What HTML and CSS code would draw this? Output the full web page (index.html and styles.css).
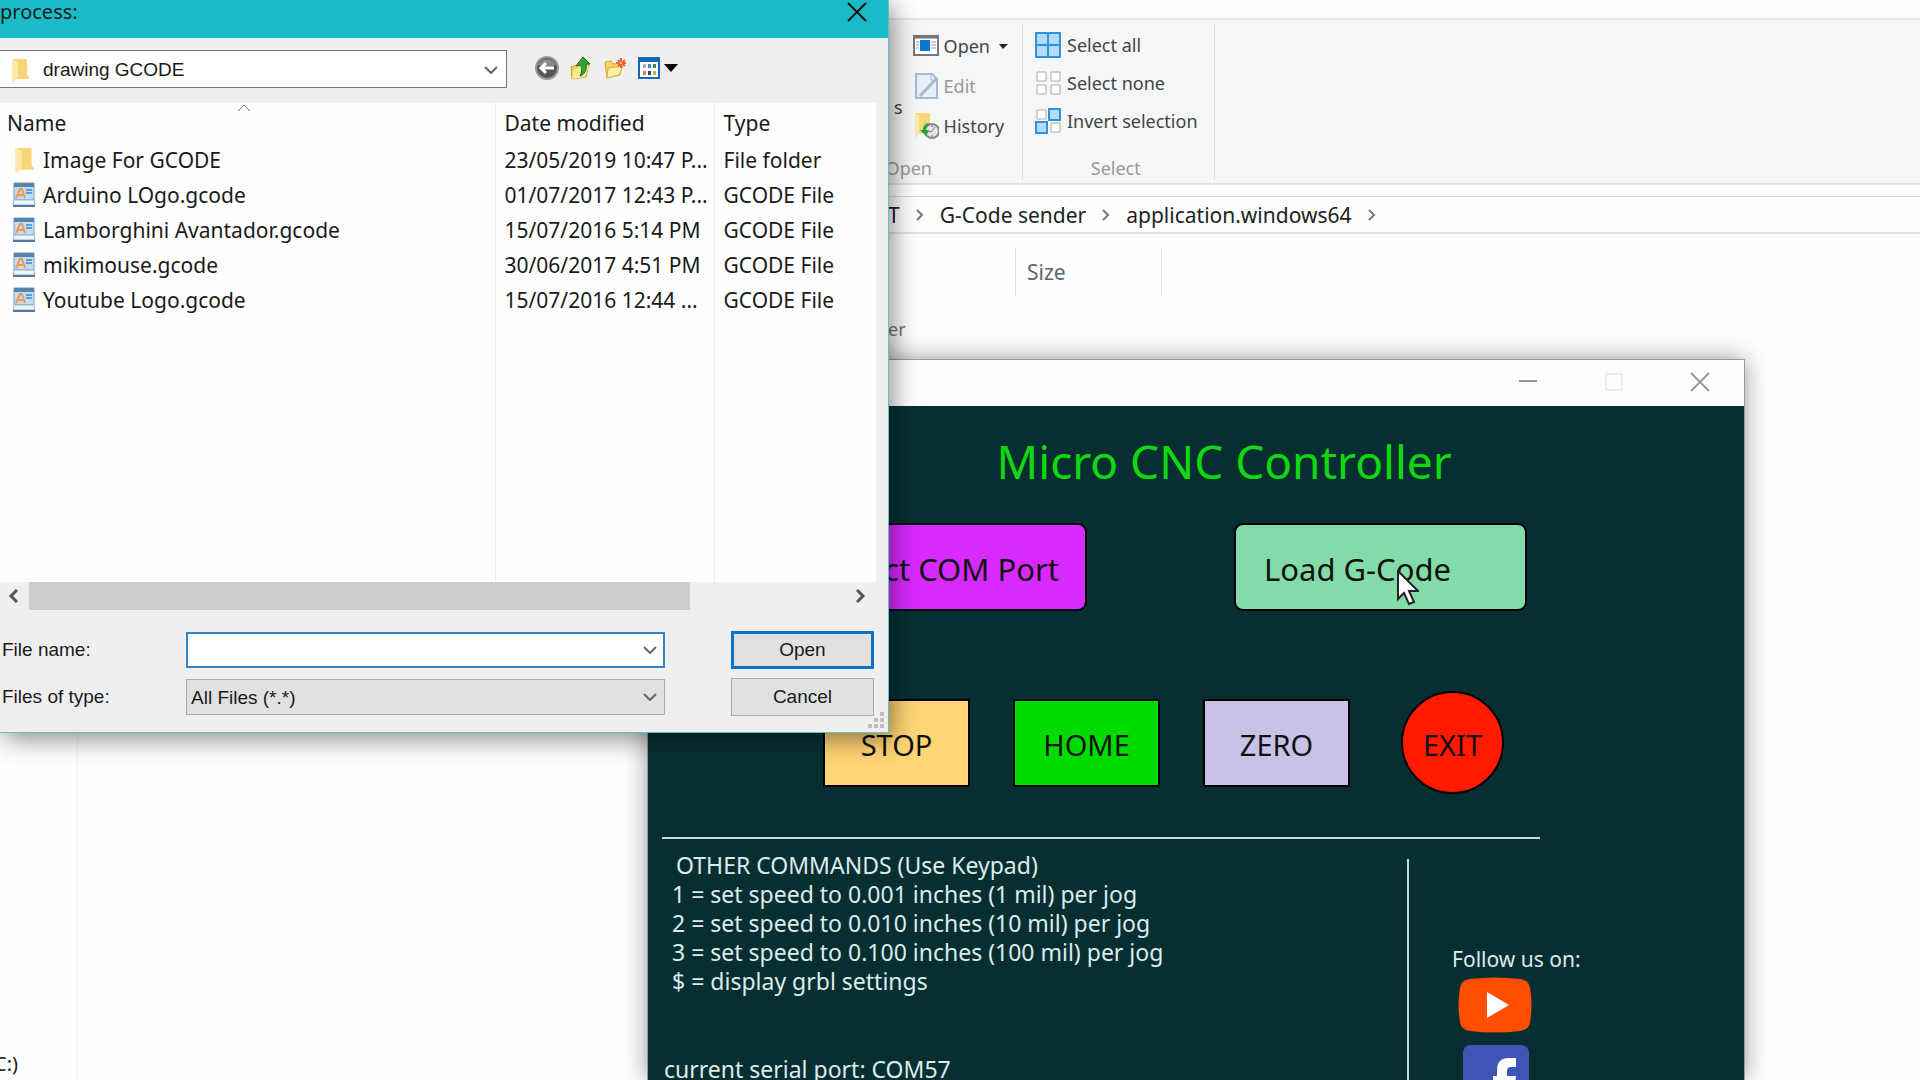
FILE: index.html
```html
<!DOCTYPE html>
<html lang="en">
<head>
    <meta charset="UTF-8">
    <meta name="viewport" content="width=device-width, initial-scale=1.0">
    <title>Micro CNC Controller</title>
    <link rel="stylesheet" href="styles.css">
</head>
<body>
    <svg class="defs" width="0" height="0" aria-hidden="true">
        <symbol id="folder" viewBox="0 0 18 24">
            <path d="M2 1h14v16l2 2v2H5z" fill="#f8d675"/>
            <path d="M1 1l6 3v16l-5 4-1-1z" fill="#fde9a9"/>
        </symbol>
        <symbol id="file" viewBox="0 0 24 26">
            <path d="M2 1h20v17H2z" fill="#c3dcf3" stroke="#7c9dbb"/>
            <path d="M2 1h20v4H2z" fill="#5584ad"/>
            <path d="M4 16l4-9h2l3 9M6 13h5" fill="none" stroke="#f09a4a" stroke-width="2"/>
            <path d="M14 8h6M14 11h6" stroke="#5b9be0" stroke-width="2"/>
            <path d="M2 18h20l1 5H1z" fill="#eef4fa" stroke="#9db4ca"/>
            <path d="M1 24h22" stroke="#56789b" stroke-width="2"/>
        </symbol>
        <symbol id="down" viewBox="0 0 14 8">
            <path d="M1 1l6 6 6-6" fill="none" stroke="#666" stroke-width="2"/>
        </symbol>
        <symbol id="chevron" viewBox="0 0 8 12">
            <path d="M1 1l5 5-5 5" fill="none" stroke="#777" stroke-width="2"/>
        </symbol>
    </svg>

    <!-- File explorer -->
    <main class="explorer">
        <div class="ribbon">
            <section class="group group-open">
                <div class="group-body">
                    <span class="cut">s</span>
                    <div class="commands">
                        <button type="button">
                            <svg width="26" height="22" viewBox="0 0 26 22">
                                <path d="M1 1h24v19H1z" fill="#fff" stroke="#777" stroke-width="2"/>
                                <path d="M1 2h24" stroke="#777" stroke-width="3"/>
                                <path d="M7 5h10v11H7z" fill="#0a74d8"/>
                                <path d="M3 7h3M3 10h3M3 13h3M18 7h5M18 10h5M18 13h5" stroke="#999"/>
                            </svg>
                            Open
                            <svg class="drop" width="9" height="5" viewBox="0 0 9 5"><path d="M0 0h9L4 5z" fill="#222"/></svg>
                        </button>
                        <button type="button" disabled>
                            <svg width="26" height="28" viewBox="0 0 26 28">
                                <path d="M3 2h16l5 5v19H3z" fill="#e6effa" stroke="#a9b8cc" stroke-width="2"/>
                                <path d="M18 2v6h6" fill="none" stroke="#a9b8cc"/>
                                <path d="M7 24L24 6" stroke="#a9b8cc" stroke-width="3"/>
                            </svg>
                            Edit
                        </button>
                        <button type="button">
                            <svg width="26" height="28" viewBox="0 0 26 28">
                                <path d="M2 1h15v18L6 22l-4 4z" fill="#fbd77c"/>
                                <path d="M2 1l4 3v18l-4 4z" fill="#fde9a9"/>
                                <circle cx="19" cy="19" r="7" fill="#e4e6e6" stroke="#888" stroke-width="2"/>
                                <path d="M15 19l3 1 4-5M19 13v2M19 23v2" fill="none" stroke="#777"/>
                                <path d="M17 11c-6 0-7 4-7 7H7l6 6 3-6h-3c0-3 1-5 4-7z" fill="#21a33c"/>
                            </svg>
                            History
                        </button>
                    </div>
                </div>
                <span class="group-name">Open</span>
            </section>
            <section class="group group-select">
                <div class="commands">
                    <button type="button">
                        <svg width="28" height="28" viewBox="0 0 28 28">
                            <path d="M2 2h24v24H2zM14 2v24M2 14h24" fill="#b4dcfa" stroke="#3390dc" stroke-width="2"/>
                        </svg>
                        Select all
                    </button>
                    <button type="button">
                        <svg width="28" height="28" viewBox="0 0 28 28">
                            <path d="M3 3h9v9H3zM17 3h9v9h-9zM3 16h9v9H3zM17 16h9v9h-9z" fill="#fff" stroke="#aaa"/>
                        </svg>
                        Select none
                    </button>
                    <button type="button">
                        <svg width="28" height="28" viewBox="0 0 28 28">
                            <path d="M3 3h9v9H3zM17 16h9v9h-9z" fill="#fff" stroke="#aaa"/>
                            <path d="M15 2h11v11H15zM2 15h11v11H2z" fill="#b4dcfa" stroke="#3390dc" stroke-width="2"/>
                        </svg>
                        Invert selection
                    </button>
                </div>
                <span class="group-name">Select</span>
            </section>
        </div>

        <nav class="address">
            <a href="#">T</a>
            <svg width="8" height="12"><use href="#chevron"/></svg>
            <a href="#">G-Code sender</a>
            <svg width="8" height="12"><use href="#chevron"/></svg>
            <a href="#">application.windows64</a>
            <svg width="8" height="12"><use href="#chevron"/></svg>
        </nav>

        <div class="content">
            <aside class="tree">C:)</aside>
            <div class="files">
                <div class="file-heads"><span class="size-head">Size</span></div>
                <div class="file-type">er</div>
            </div>
        </div>
    </main>

    <!-- CNC controller window -->
    <section class="cnc">
        <header class="cnc-bar">
            <button type="button" aria-label="Minimize"><svg width="20" height="20" viewBox="0 0 20 20"><path d="M1 9h18" stroke="#999" stroke-width="2"/></svg></button>
            <button type="button" aria-label="Maximize" disabled><svg width="20" height="20" viewBox="0 0 20 20"><path d="M2 2h16v16H2z" fill="none" stroke="#ddd"/></svg></button>
            <button type="button" aria-label="Close"><svg width="20" height="20" viewBox="0 0 20 20"><path d="M1 1l18 18M19 1L1 19" stroke="#999" stroke-width="2"/></svg></button>
        </header>
        <div class="cnc-body">
            <h1>Micro CNC Controller</h1>
            <div class="main-buttons">
                <button type="button" class="port">Select COM Port</button>
                <button type="button" class="load">Load G-Code
                    <svg class="cursor" width="22" height="36" viewBox="0 0 22 36"><path d="M1 1v28l6-6 5 11 5-2-5-11h9z" fill="#fff" stroke="#222" stroke-width="2"/></svg>
                </button>
            </div>
            <div class="move-buttons">
                <button type="button" class="stop">STOP</button>
                <button type="button" class="home">HOME</button>
                <button type="button" class="zero">ZERO</button>
                <button type="button" class="exit">EXIT</button>
            </div>
            <hr>
            <div class="lower">
                <div class="help">
                    <h2>OTHER COMMANDS (Use Keypad)</h2>
                    <p>1 = set speed to 0.001 inches (1 mil) per jog</p>
                    <p>2 = set speed to 0.010 inches (10 mil) per jog</p>
                    <p>3 = set speed to 0.100 inches (100 mil) per jog</p>
                    <p>$ = display grbl settings</p>
                    <p class="serial">current serial port: COM57</p>
                </div>
                <div class="follow">
                    <span>Follow us on:</span>
                    <a href="#" aria-label="YouTube">
                        <svg width="74" height="56" viewBox="0 0 74 56">
                            <path d="M12 2Q37-1 62 2Q71 3 72 11Q75 28 72 45Q71 53 62 54Q37 57 12 54Q3 53 2 45Q-1 28 2 11Q3 3 12 2z" fill="#ff4e00"/>
                            <path d="M29 15l22 13-22 13z" fill="#fff"/>
                        </svg>
                    </a>
                    <a href="#" aria-label="Facebook">
                        <svg width="66" height="66" viewBox="0 0 66 66">
                            <rect width="66" height="66" rx="8" fill="#3f55b5"/>
                            <path d="M53 13v9h-5q-4 0-4 4v5h9l-1 9h-8v26H34V40h-4v-9h4v-6q0-12 12-12z" fill="#fff"/>
                        </svg>
                    </a>
                </div>
            </div>
        </div>
    </section>

    <!-- Open file dialog -->
    <form class="dialog">
        <header class="dialog-bar">
            <span>process:</span>
            <button type="button" aria-label="Close"><svg width="20" height="20" viewBox="0 0 20 20"><path d="M1 1l18 18M19 1L1 19" stroke="#111" stroke-width="2"/></svg></button>
        </header>
        <div class="toolbar">
            <button type="button" class="look-in">
                <svg width="18" height="24"><use href="#folder"/></svg>
                <span>drawing GCODE</span>
                <svg width="14" height="8"><use href="#down"/></svg>
            </button>
            <button type="button" aria-label="Back">
                <svg width="24" height="24" viewBox="0 0 24 24">
                    <circle cx="12" cy="12" r="11" fill="#555" stroke="#999" stroke-width="2"/>
                    <path d="M3 9a10 10 0 0 1 18 0q-9 4-18 0z" fill="#888"/>
                    <path d="M19 12H6M11 7l-5 5 5 5" fill="none" stroke="#fff" stroke-width="3"/>
                </svg>
            </button>
            <button type="button" aria-label="Up one level">
                <svg width="22" height="24" viewBox="0 0 22 24">
                    <path d="M1 11l6-2 2-3 8 1 2 1-3 13-14 2z" fill="#f5ce52" stroke="#c99a2b"/>
                    <path d="M4 13l15-3-4 11-13 2z" fill="#fdeb93"/>
                    <path d="M13 1l7 7h-4c1 6-1 10-6 12 2-4 2-8 1-11l-5 1z" fill="#35a52c" stroke="#187318"/>
                </svg>
            </button>
            <button type="button" aria-label="New folder">
                <svg width="24" height="24" viewBox="0 0 24 24">
                    <path d="M2 6l6-1 2 3 9-1-2 12L4 22z" fill="#f8d465" stroke="#d3a23c"/>
                    <path d="M5 12l15-2-4 9-12 3z" fill="#fff0a4" stroke="#dcb04a"/>
                    <path d="M18 2v10M13 7h10M15 4l7 6M22 4l-7 6" stroke="#ee6137" stroke-width="2"/>
                    <circle cx="18" cy="7" r="1" fill="#ffd0a0"/>
                </svg>
            </button>
            <button type="button" class="views" aria-label="Views">
                <svg width="22" height="22" viewBox="0 0 22 22">
                    <path d="M1 1h20v20H1z" fill="#fff" stroke="#1767b5" stroke-width="2"/>
                    <path d="M1 2h20v3H1z" fill="#1767b5"/>
                    <path d="M5 7h3v4H5z" fill="#a9b7c6"/><path d="M10 7h3v4h-3z" fill="#4e86c4"/><path d="M15 7h3v4h-3z" fill="#3a8f5d"/>
                    <path d="M5 14h3v4H5z" fill="#ee7148"/><path d="M10 14h3v4h-3z" fill="#233f8f"/><path d="M15 14h3v4h-3z" fill="#d8a72a"/>
                </svg>
                <svg width="14" height="8" viewBox="0 0 14 8"><path d="M0 0h14L7 8z" fill="#000"/></svg>
            </button>
        </div>
        <div class="list">
            <table>
                <colgroup><col class="col-name"><col class="col-date"><col></colgroup>
                <thead>
                    <tr>
                        <th>Name <svg class="sort" width="14" height="8" viewBox="0 0 14 8"><path d="M1 7l6-6 6 6" fill="none" stroke="#777"/></svg></th>
                        <th>Date modified</th>
                        <th>Type</th>
                    </tr>
                </thead>
                <tbody>
                    <tr><td class="name"><svg width="24" height="26"><use href="#folder"/></svg>Image For GCODE</td><td>23/05/2019 10:47 P...</td><td>File folder</td></tr>
                    <tr><td class="name"><svg width="24" height="26"><use href="#file"/></svg>Arduino LOgo.gcode</td><td>01/07/2017 12:43 P...</td><td>GCODE File</td></tr>
                    <tr><td class="name"><svg width="24" height="26"><use href="#file"/></svg>Lamborghini Avantador.gcode</td><td>15/07/2016 5:14 PM</td><td>GCODE File</td></tr>
                    <tr><td class="name"><svg width="24" height="26"><use href="#file"/></svg>mikimouse.gcode</td><td>30/06/2017 4:51 PM</td><td>GCODE File</td></tr>
                    <tr><td class="name"><svg width="24" height="26"><use href="#file"/></svg>Youtube Logo.gcode</td><td>15/07/2016 12:44 ...</td><td>GCODE File</td></tr>
                    <tr class="rest"><td></td><td></td><td></td></tr>
                </tbody>
            </table>
        </div>
        <div class="scrollbar">
            <svg width="10" height="14" viewBox="0 0 10 14"><path d="M9 1L3 7l6 6" fill="none" stroke="#555" stroke-width="3"/></svg>
            <div class="track"><div class="thumb"></div></div>
            <svg width="10" height="14" viewBox="0 0 10 14"><path d="M1 1l6 6-6 6" fill="none" stroke="#555" stroke-width="3"/></svg>
        </div>
        <div class="fields">
            <label for="fileName">File name:</label>
            <div class="combo">
                <input type="text" id="fileName">
                <svg width="14" height="8"><use href="#down"/></svg>
            </div>
            <button type="submit" class="primary">Open</button>
            <label for="fileType">Files of type:</label>
            <div class="combo">
                <select id="fileType"><option>All Files (*.*)</option></select>
                <svg width="14" height="8"><use href="#down"/></svg>
            </div>
            <button type="button">Cancel</button>
        </div>
        <svg class="grip" width="16" height="16" viewBox="0 0 16 16"><path d="M12 0h4v4h-4zM6 6h4v4H6zM12 6h4v4h-4zM0 12h4v4H0zM6 12h4v4H6zM12 12h4v4h-4z" fill="#bfbfbf"/></svg>
    </form>
</body>
</html>
```

FILE: styles.css
```css
* {
    box-sizing: border-box;
}

body {
    margin: 0;
    height: 100vh;
    overflow: hidden;
    position: relative;
    background-color: #fdfefe;
    font-family: "Noto Sans", sans-serif;
    font-size: 21px;
    color: #222;
}

button {
    padding: 0;
    border: none;
    background: none;
    font: inherit;
    color: inherit;
    display: flex;
    align-items: center;
}

svg {
    flex: none;
    display: block;
}

.defs {
    position: absolute;
}

a {
    color: inherit;
    text-decoration: none;
}

/* explorer */
.explorer {
    height: 100%;
    padding-top: 18px;
    display: flex;
    flex-direction: column;
}

.ribbon {
    display: flex;
    height: 167px;
    padding: 4px 0 3px;
    background-color: #f5f6f7;
    border-top: 2px solid #e2e3e4;
    border-bottom: 2px solid #e2e3e4;
    font-size: 18px;
    color: #444;
}

.group {
    display: flex;
    flex-direction: column;
    justify-content: space-between;
    border-right: 1px solid #dcdddd;
}

.group-open {
    width: 1023px;
    align-items: flex-end;
    padding: 2px 14px 0 0;
}

.group-body {
    display: flex;
    align-items: center;
    gap: 10px;
}

.cut {
    padding-top: 42px;
}

.commands button {
    height: 38px;
    gap: 5px;
}

.group-open .commands button {
    height: 40px;
}

.commands button:disabled {
    color: #999;
}

.commands .drop {
    margin-left: 4px;
}

.group-name {
    color: #999;
    line-height: 24px;
}

.group-open .group-name {
    padding-right: 76px;
}

.group-select {
    padding: 2px 16px 0 11px;
}

.group-select .group-name {
    text-align: center;
}

.address {
    display: flex;
    align-items: center;
    gap: 16px;
    height: 38px;
    margin-top: 11px;
    padding-left: 888px;
    border-top: 1px solid #dcdcdc;
    border-bottom: 2px solid #e2e2e2;
}

.content {
    flex: 1;
    display: flex;
}

.tree {
    width: 78px;
    border-right: 1px solid #f3f3f5;
    display: flex;
    align-items: flex-end;
    justify-content: flex-end;
    padding: 0 59px 3px 0;
    font-size: 20px;
}

.files {
    padding-left: 810px;
}

.file-heads {
    padding: 14px 0 0 127px;
    color: #5c6470;
}

.size-head {
    display: flex;
    align-items: center;
    width: 147px;
    height: 48px;
    padding-left: 11px;
    border-left: 1px solid #e2e2e2;
    border-right: 1px solid #e2e2e2;
}

.file-type {
    margin-top: 18px;
    line-height: 30px;
    font-size: 18px;
    color: #777;
}

/* cnc window */
.cnc {
    position: absolute;
    left: 33.7%;
    top: 359px;
    width: 57.2%;
    bottom: 0;
    overflow: hidden;
    border: 1px solid #999;
    border-bottom: none;
    background-color: #072f32;
    box-shadow: 0 0 22px rgba(0, 0, 0, 0.4);
    display: flex;
    flex-direction: column;
}

.cnc-bar {
    display: flex;
    justify-content: flex-end;
    gap: 66px;
    height: 46px;
    padding: 0 34px 2px;
    background-color: #fefefe;
    flex: none;
}

.cnc-body {
    flex: 1;
    display: flex;
    flex-direction: column;
    padding: 25px 16px 0 14px;
    color: #dcebec;
}

.cnc h1 {
    margin: 0 0 32px;
    padding-left: 58px;
    font-size: 46px;
    font-weight: normal;
    line-height: 60px;
    text-align: center;
    color: #10d810;
}

.main-buttons,
.move-buttons {
    display: flex;
    font-size: 29px;
    color: #111;
}

.main-buttons {
    gap: 147px;
    padding-left: 132px;
    font-size: 31px;
}

.main-buttons button {
    position: relative;
    width: 293px;
    height: 88px;
    padding: 4px 0 0 28px;
    border: 2px solid #000;
    border-radius: 9px;
}

.port {
    background-color: #d829ff;
}

.load {
    background-color: #82dba8;
}

.cursor {
    position: absolute;
    left: 161px;
    top: 45px;
}

.move-buttons {
    align-items: center;
    gap: 43px;
    padding: 80px 0 43px 161px;
}

.move-buttons button {
    width: 147px;
    height: 88px;
    padding-top: 3px;
    justify-content: center;
    border: 2px solid #000;
}

.stop {
    background-color: #ffd575;
}

.home {
    background-color: #00db00;
}

.zero {
    background-color: #c8c3e6;
}

.move-buttons .exit {
    width: 103px;
    height: 103px;
    margin-left: 8px;
    border-radius: 50%;
    background-color: #ff1a00;
}

.cnc hr {
    width: auto;
    height: 2px;
    margin: 0 188px 0 0;
    border: none;
    background-color: #c5dcdc;
}

.lower {
    flex: 1;
    display: flex;
    padding-top: 12px;
    font-size: 23px;
    line-height: 29px;
}

.help {
    width: 745px;
    padding-left: 10px;
}

.help h2 {
    margin: 0;
    padding-left: 4px;
    font-size: inherit;
    font-weight: normal;
}

.help p {
    margin: 0;
}

.help .serial {
    margin: 59px 0 0 -8px;
}

.follow {
    display: flex;
    flex-direction: column;
    flex: 1;
    margin-top: 8px;
    padding: 86px 0 0 43px;
    border-left: 2px solid #c5dcdc;
    font-size: 21px;
}

.follow a {
    margin: 3px 0 0 6px;
}

.follow a + a {
    margin: 12px 0 0 11px;
}

/* open dialog */
.dialog {
    position: absolute;
    left: 0;
    top: 0;
    width: 46.3%;
    border-right: 1px solid #5cc4c8;
    border-bottom: 1px solid #5cc4c8;
    background-color: #f0eff0;
    box-shadow: 4px 6px 24px rgba(0, 0, 0, 0.45);
    font-family: "Liberation Sans", sans-serif;
    font-size: 19px;
    color: #1a1a1a;
}

.dialog-bar {
    display: flex;
    justify-content: space-between;
    height: 38px;
    padding: 0 21px 15px 0;
    background-color: #1abbc6;
    font-family: "Noto Sans", sans-serif;
    font-size: 20px;
    align-items: center;
}

.toolbar {
    display: flex;
    align-items: center;
    gap: 11px;
    height: 65px;
    padding-bottom: 6px;
}

.look-in {
    width: 507px;
    height: 38px;
    margin: 3px 17px 0 0;
    padding: 2px 8px 0 11px;
    gap: 14px;
    border: 1px solid #777;
    border-left: none;
    background-color: #fff;
    text-align: left;
}

.look-in span {
    flex: 1;
}

.views {
    gap: 4px;
}

.list {
    margin-right: 12px;
    background-color: #fefefe;
    font-family: "Noto Sans", sans-serif;
    font-size: 21px;
}

.list table {
    width: 100%;
    table-layout: fixed;
    border-collapse: collapse;
}

.col-name {
    width: 495px;
}

.col-date {
    width: 219px;
}

.list th {
    position: relative;
    height: 39px;
    padding: 0 0 0 7px;
    font-weight: normal;
    text-align: left;
}

.list td {
    height: 35px;
    padding: 0 0 0 7px;
    white-space: nowrap;
}

.list th + th,
.list td + td {
    padding-left: 9px;
    border-left: 1px solid #ececec;
}

.list .name svg {
    display: inline-block;
    margin: -3px 7px 0 5px;
    vertical-align: middle;
}

.list .rest td {
    height: 265px;
}

.sort {
    position: absolute;
    left: 48%;
    top: 1px;
}

.scrollbar {
    display: flex;
    align-items: center;
    gap: 11px;
    height: 28px;
    padding: 0 22px 0 8px;
}

.track {
    flex: 1;
}

.thumb {
    width: 81%;
    height: 28px;
    background-color: #cdcdcd;
}

.fields {
    display: grid;
    grid-template-columns: 184px 1fr 143px;
    column-gap: 0;
    row-gap: 9px;
    align-items: center;
    padding: 21px 14px 16px 2px;
}

.combo {
    position: relative;
    margin-right: 66px;
}

.combo input,
.combo select {
    display: block;
    width: 100%;
    height: 36px;
    padding: 0 4px;
    border: 1px solid #aaa;
    border-radius: 0;
    background-color: #e1e1e1;
    font: inherit;
    color: inherit;
    appearance: none;
    outline: none;
}

.combo input {
    border: 2px solid #3585c6;
    background-color: #fff;
}

.combo svg {
    position: absolute;
    right: 8px;
    top: 14px;
}

.fields button {
    justify-content: center;
    height: 38px;
    border: 1px solid #aaa;
    background-color: #e1e1e1;
}

.fields .primary {
    border: 3px solid #0a74c8;
}

.grip {
    position: absolute;
    right: 4px;
    bottom: 4px;
}
```
